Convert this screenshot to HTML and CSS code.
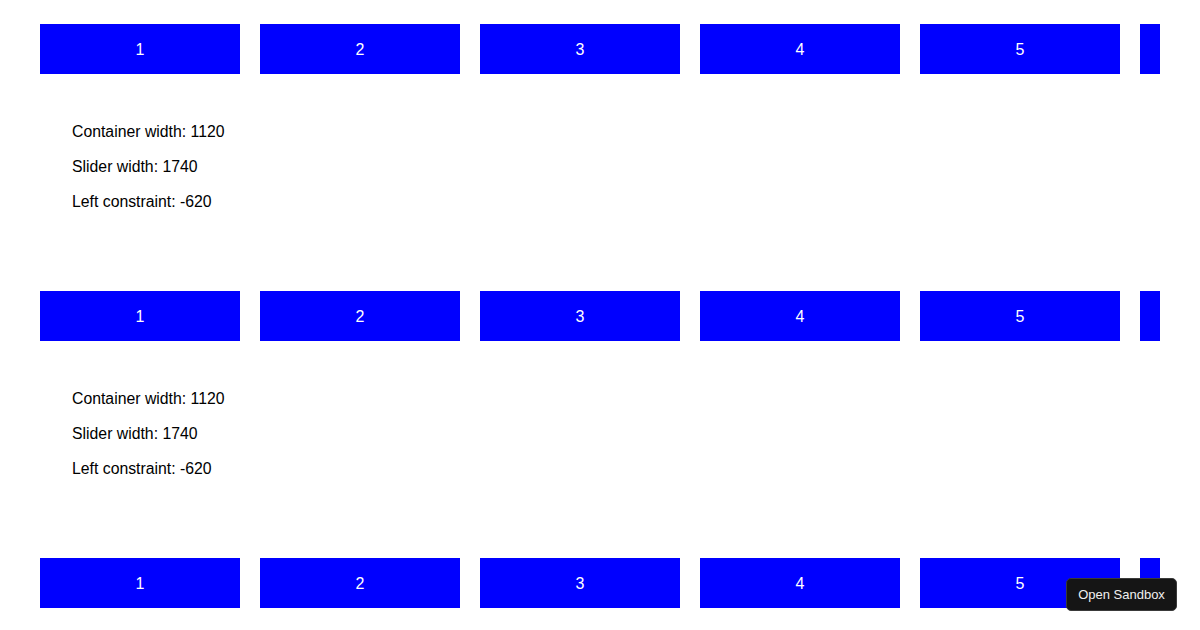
FILE: index.html
```html
<!DOCTYPE html>
<html>
<head>
<meta charset="utf-8">
<link rel="stylesheet" href="styles.css">
</head>
<body>
<div class="page">
  <section class="section">
    <div class="container">
      <div class="slider">
        <div class="item">1</div><div class="item">2</div><div class="item">3</div><div class="item">4</div>
        <div class="item">5</div><div class="item">6</div><div class="item">7</div><div class="item">8</div>
      </div>
    </div>
    <div class="info">
      <p>Container width: 1120</p>
      <p>Slider width: 1740</p>
      <p>Left constraint: -620</p>
    </div>
  </section>
  <section class="section">
    <div class="container">
      <div class="slider">
        <div class="item">1</div><div class="item">2</div><div class="item">3</div><div class="item">4</div>
        <div class="item">5</div><div class="item">6</div><div class="item">7</div><div class="item">8</div>
      </div>
    </div>
    <div class="info">
      <p>Container width: 1120</p>
      <p>Slider width: 1740</p>
      <p>Left constraint: -620</p>
    </div>
  </section>
  <section class="section">
    <div class="container">
      <div class="slider">
        <div class="item">1</div><div class="item">2</div><div class="item">3</div><div class="item">4</div>
        <div class="item">5</div><div class="item">6</div><div class="item">7</div><div class="item">8</div>
      </div>
    </div>
    <div class="info">
      <p>Container width: 1120</p>
      <p>Slider width: 1740</p>
      <p>Left constraint: -620</p>
    </div>
  </section>
</div>
<a class="sandbox-btn">Open Sandbox</a>
</body>
</html>
```
FILE: styles.css
```css
html, body {
  margin: 0;
  padding: 0;
  background: #fff;
  overflow: hidden;
  height: 630px;
}
body {
  font-family: "Liberation Sans", Arial, sans-serif;
  color: #000;
}
.page {
  padding: 24px 40px 0;
  display: flex;
  flex-direction: column;
  gap: 32px;
}
.container {
  width: 1120px;
  height: 50px;
  overflow: hidden;
}
.slider {
  display: flex;
  gap: 20px;
  width: 1740px;
}
.item {
  flex: 0 0 200px;
  height: 50px;
  box-sizing: border-box;
  padding-top: 2px;
  background: #0000ff;
  color: #fff;
  font-size: 16px;
  display: flex;
  align-items: center;
  justify-content: center;
}
.info {
  padding: 32px;
}
.info p {
  margin: 16px 0;
  font-size: 15.8px;
  line-height: 19px;
}
.sandbox-btn {
  position: fixed;
  right: 23px;
  bottom: 19px;
  width: 111px;
  height: 33px;
  box-sizing: border-box;
  padding-bottom: 1px;
  background: #151515;
  border: 1px solid #3a3a3a;
  border-radius: 5px;
  color: #f0f0f0;
  font-size: 13px;
  display: flex;
  align-items: center;
  justify-content: center;
}
```
